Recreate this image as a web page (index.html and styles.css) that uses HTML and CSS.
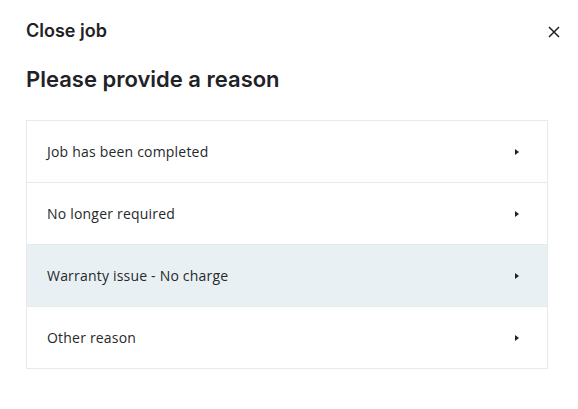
FILE: index.html
```html
<!DOCTYPE html>
<html>
<head>
<meta charset="utf-8">
<link rel="stylesheet" href="styles.css">
</head>
<body>
<div class="modal">
  <div class="header">
    <h1 class="title">Close job</h1>
    <button class="close" aria-label="Close">
      <svg width="12" height="12" viewBox="0 0 12 12"><path d="M1 1L11 11M11 1L1 11" stroke="#1f2226" stroke-width="1.5" fill="none"/></svg>
    </button>
  </div>
  <h2 class="subtitle">Please provide a reason</h2>
  <ul class="list">
    <li class="item"><span>Job has been completed</span><span class="caret"></span></li>
    <li class="item"><span>No longer required</span><span class="caret"></span></li>
    <li class="item active"><span>Warranty issue - No charge</span><span class="caret"></span></li>
    <li class="item"><span>Other reason</span><span class="caret"></span></li>
  </ul>
</div>
</body>
</html>
```
FILE: styles.css
```css
* { box-sizing: border-box; }
html, body { margin: 0; padding: 0; background: #fff; }
body { font-family: Inter, "Liberation Sans", sans-serif; color: #1f2226; }
.modal { padding: 19px 18px 0 26px; width: 578px; }
.header { display: flex; align-items: center; justify-content: space-between; height: 24px; }
.title { margin: 0; font-size: 18px; font-weight: 600; line-height: 24px; }
.close { border: 0; background: none; padding: 0; width: 12px; height: 12px; display: flex; margin-top: 1px; }
.subtitle { margin: 22px 0 0; font-size: 22px; font-weight: 600; line-height: 28px; }
.list { list-style: none; margin: 27px 0 0; padding: 0; width: 522px; border: 1px solid #e9e9e9; }
.item { display: flex; align-items: center; justify-content: space-between; height: 62px; padding: 0 28px 0 20px; font-family: "Open Sans", sans-serif; font-size: 14px; letter-spacing: 0.2px; color: #26292c; border-top: 1px solid #e9e9e9; }
.item:first-child { border-top: 0; height: 61px; }
.item.active { background: #e9f0f4; }
.caret { width: 0; height: 0; border-top: 3.5px solid transparent; border-bottom: 3.5px solid transparent; border-left: 4px solid #1f2226; }
```
